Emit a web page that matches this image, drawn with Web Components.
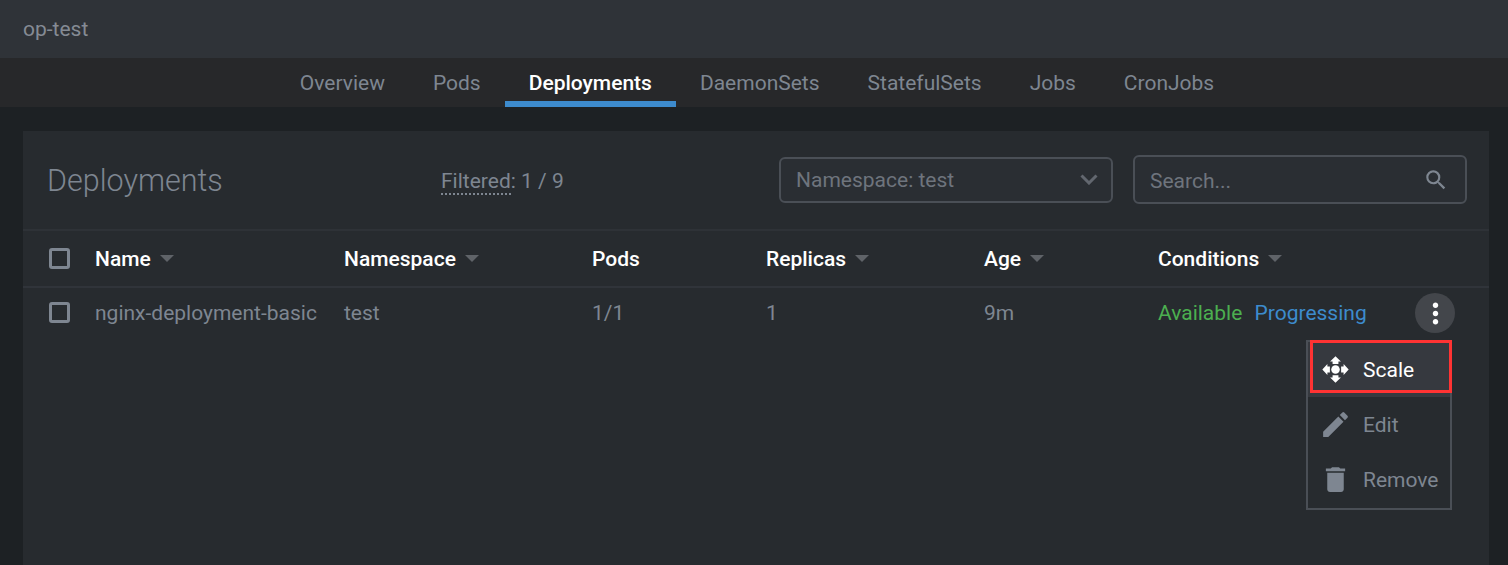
<!DOCTYPE html>
<html>
<head>
<meta charset="utf-8">
<title>Deployments</title>
<style>
html, body { margin: 0; padding: 0; height: 100%; overflow: hidden; background: #1d2124; }
body { font-family: Roboto, "Liberation Sans", sans-serif; font-size: 21px; color: #7e8691; }
</style>
</head>
<body>
<app-header>op-test</app-header>
<tab-bar>
  <tab-item>Overview</tab-item>
  <tab-item>Pods</tab-item>
  <tab-item active>Deployments</tab-item>
  <tab-item>DaemonSets</tab-item>
  <tab-item>StatefulSets</tab-item>
  <tab-item>Jobs</tab-item>
  <tab-item>CronJobs</tab-item>
</tab-bar>
<deploy-card></deploy-card>

<script>
const arrow = 'M12 0.3L16.8 4.8H14.6V7H9.4V4.8H7.2Z';
const ICONS = {
  search: '<path d="M15.5 14h-.79l-.28-.27A6.47 6.47 0 0 0 16 9.5 6.5 6.5 0 1 0 9.5 16c1.61 0 3.09-.59 4.23-1.57l.27.28v.79l5 4.99L20.49 19l-4.99-5zm-6 0C7.01 14 5 11.99 5 9.5S7.01 5 9.5 5 14 7.01 14 9.5 11.99 14 9.5 14z"/>',
  dots: '<path d="M12 8c1.1 0 2-.9 2-2s-.9-2-2-2-2 .9-2 2 .9 2 2 2zm0 2c-1.1 0-2 .9-2 2s.9 2 2 2 2-.9 2-2-.9-2-2-2zm0 6c-1.1 0-2 .9-2 2s.9 2 2 2 2-.9 2-2-.9-2-2-2z"/>',
  scale: `<circle cx="12" cy="12" r="3.8"/>
    <path d="${arrow}"/><path d="${arrow}" transform="rotate(90 12 12)"/>
    <path d="${arrow}" transform="rotate(180 12 12)"/><path d="${arrow}" transform="rotate(270 12 12)"/>`,
  edit: '<path d="M3 17.25V21h3.75L17.81 9.94l-3.75-3.75L3 17.25zM20.71 7.04a1 1 0 0 0 0-1.41l-2.34-2.34a1 1 0 0 0-1.41 0l-1.83 1.83 3.75 3.75 1.83-1.83z"/>',
  trash: '<path d="M6 19c0 1.1.9 2 2 2h8c1.1 0 2-.9 2-2V7H6v12zM19 4h-3.5l-1-1h-5l-1 1H5v2h14V4z"/>'
};

class UiIcon extends HTMLElement {
  constructor() {
    super();
    const size = this.getAttribute('size') || 24;
    this.attachShadow({ mode: 'open' }).innerHTML = `
      <style>:host{display:inline-flex;flex:none;width:${size}px;height:${size}px}svg{width:100%;height:100%;fill:currentColor;display:block}</style>
      <svg viewBox="0 0 24 24">${ICONS[this.getAttribute('name')] || ''}</svg>`;
  }
}
customElements.define('ui-icon', UiIcon);

class AppHeader extends HTMLElement {
  constructor() {
    super();
    this.attachShadow({ mode: 'open' }).innerHTML = `
      <style>:host{display:flex;align-items:center;height:58px;padding-left:23px;background:#2f3338;color:#858b94;font-size:21px;box-sizing:border-box}</style>
      <slot></slot>`;
  }
}
customElements.define('app-header', AppHeader);

class TabBar extends HTMLElement {
  constructor() {
    super();
    this.attachShadow({ mode: 'open' }).innerHTML = `
      <style>:host{display:flex;justify-content:center;height:49px;background:#27282a;padding-left:6px}</style>
      <slot></slot>`;
  }
}
customElements.define('tab-bar', TabBar);

class TabItem extends HTMLElement {
  constructor() {
    super();
    this.attachShadow({ mode: 'open' }).innerHTML = `
      <style>
      :host{display:flex;align-items:center;padding:6px 24px 0;box-sizing:border-box;border-bottom:6px solid transparent;color:#7e8691;font-size:21px}
      :host([active]){color:#fff;font-weight:500;border-bottom-color:#3d8bcd}
      </style>
      <slot></slot>`;
  }
}
customElements.define('tab-item', TabItem);

class UiCheck extends HTMLElement {
  constructor() {
    super();
    this.attachShadow({ mode: 'open' }).innerHTML = `
      <style>:host{display:block;width:21px;height:21px;box-sizing:border-box;border:3px solid #7e8691;border-radius:3px}</style>`;
  }
}
customElements.define('ui-check', UiCheck);

class SortHead extends HTMLElement {
  constructor() {
    super();
    this.attachShadow({ mode: 'open' }).innerHTML = `
      <style>
      :host{display:flex;align-items:center;gap:9px;color:#fff;font-weight:500;font-size:21px}
      i{display:block;width:0;height:0;border:7px solid transparent;border-top:7px solid #5f6368;border-bottom:0}
      </style>
      <slot></slot>${this.hasAttribute('nosort') ? '' : '<i></i>'}`;
  }
}
customElements.define('sort-head', SortHead);

class FieldBox extends HTMLElement {
  constructor() {
    super();
    this.attachShadow({ mode: 'open' }).innerHTML = `
      <style>
      :host{display:flex;align-items:center;justify-content:space-between;box-sizing:border-box;border:2px solid #4a4f56;border-radius:6px;padding:0 15px;color:#6e747d;font-size:21px;background:#2a2e33}
      </style>
      <slot></slot><slot name="end"></slot>`;
  }
}
customElements.define('field-box', FieldBox);

class MenuItem extends HTMLElement {
  constructor() {
    super();
    this.attachShadow({ mode: 'open' }).innerHTML = `
      <style>
      :host{display:flex;align-items:center;gap:11px;height:55px;padding-left:11px;color:#7e8691;font-size:21px;box-sizing:border-box;position:relative}
      :host([active]){color:#fff;background:#36393f}
      :host([active])::after{content:"";position:absolute;left:2px;right:-2px;top:-2px;height:53px;box-sizing:border-box;border:3px solid #ff3333}
      </style>
      <slot name="icon"></slot><slot></slot>`;
  }
}
customElements.define('menu-item', MenuItem);

class ActionMenu extends HTMLElement {
  constructor() {
    super();
    this.attachShadow({ mode: 'open' }).innerHTML = `
      <style>
      :host{position:absolute;left:1283px;top:209px;width:146px;height:170px;box-sizing:border-box;border:2px solid #4a4f56;background:#272b2f;display:block}
      </style>
      <slot></slot>`;
  }
}
customElements.define('action-menu', ActionMenu);

class DeployCard extends HTMLElement {
  constructor() {
    super();
    this.attachShadow({ mode: 'open' }).innerHTML = `
      <style>
      :host{display:block;position:relative;height:434px;margin:24px 19px 0 23px;background:#272b2f;font-size:21px}
      .top{display:flex;align-items:center;padding:0 0 1px 24px;border-bottom:2px solid #2e3237;box-sizing:content-box;height:97px}
      h1{margin:2px 0 0;font-weight:300;font-size:30.5px;color:#7e8691;width:394px}
      .filter{width:338px;color:#7e8691;margin-top:2px}
      .filter u{text-decoration:none;border-bottom:2px dotted #7e8691}
      .ns{width:334px;height:46px;margin-right:20px;padding-right:13px}
      .search{width:334px;height:49px;padding-right:16px}
      .search span{padding-top:2px}
      .search ui-icon{color:#7e8691}
      .row{display:grid;grid-template-columns:46px 249px 248px 174px 218px 174px 1fr;align-items:center;padding-left:26px}
      .head{height:55px;border-bottom:2px solid #30343a}
      .data{height:48px;color:#7e8691}
      .data > div{padding-top:2px}
      .ok{color:#4caf50}
      .prog{color:#3d8bcd;margin-left:7px}
      .more{position:absolute;left:1392px;top:162px;width:40px;height:40px;border-radius:50%;background:#43464b;color:#fff;display:flex;align-items:center;justify-content:center}
      </style>
      <div class="top">
        <h1>Deployments</h1>
        <div class="filter"><u>Filtered</u>: 1 / 9</div>
        <field-box class="ns">Namespace: test
          <svg slot="end" width="18" height="11" viewBox="0 0 18 11"><path d="M1.5 1.5L9 9l7.5-7.5" fill="none" stroke="#62676f" stroke-width="3"/></svg>
        </field-box>
        <field-box class="search"><span>Search...</span><ui-icon slot="end" name="search" size="26"></ui-icon></field-box>
      </div>
      <div class="row head">
        <ui-check></ui-check>
        <sort-head>Name</sort-head>
        <sort-head>Namespace</sort-head>
        <sort-head nosort>Pods</sort-head>
        <sort-head>Replicas</sort-head>
        <sort-head>Age</sort-head>
        <sort-head>Conditions</sort-head>
      </div>
      <div class="row data">
        <ui-check></ui-check>
        <div>nginx-deployment-basic</div>
        <div>test</div>
        <div>1/1</div>
        <div>1</div>
        <div>9m</div>
        <div><span class="ok">Available</span> <span class="prog">Progressing</span></div>
      </div>
      <div class="more"><ui-icon name="dots" size="33"></ui-icon></div>
      <action-menu>
        <menu-item active><ui-icon slot="icon" name="scale" size="27" style="margin:0 3px"></ui-icon>Scale</menu-item>
        <menu-item><ui-icon slot="icon" name="edit" size="33"></ui-icon>Edit</menu-item>
        <menu-item><ui-icon slot="icon" name="trash" size="33"></ui-icon>Remove</menu-item>
      </action-menu>`;
  }
}
customElements.define('deploy-card', DeployCard);
</script>
</body>
</html>
